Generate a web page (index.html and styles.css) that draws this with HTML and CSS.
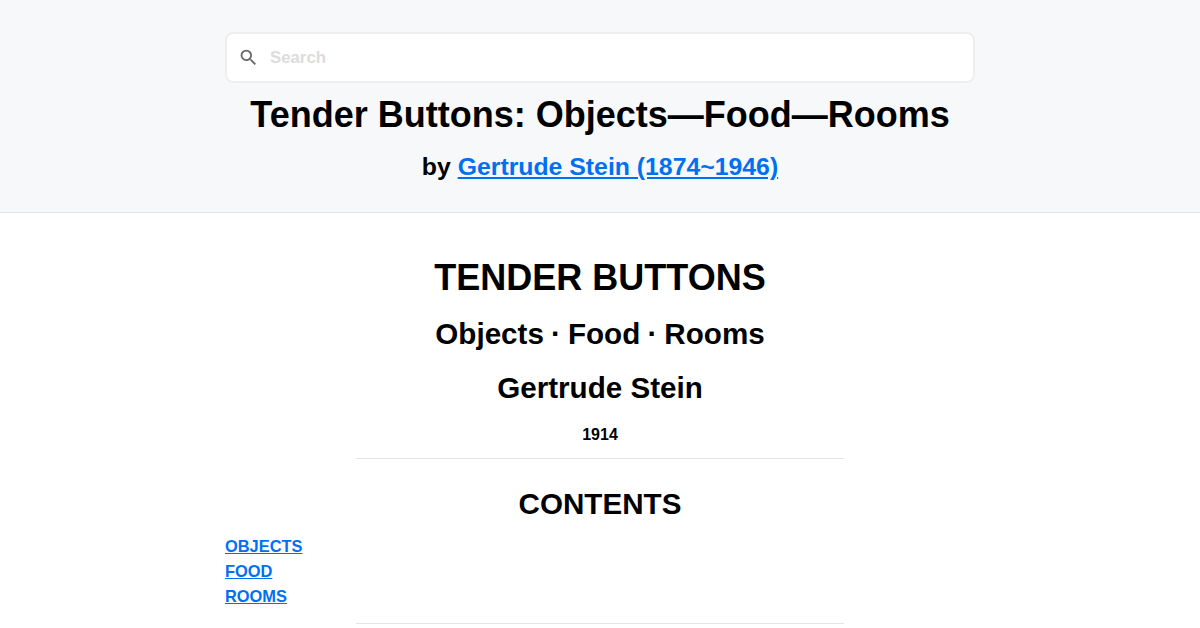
FILE: index.html
```html
<!DOCTYPE html>
<html lang="en">
<head>
<meta charset="utf-8">
<title>Tender Buttons</title>
<link rel="stylesheet" href="styles.css">
</head>
<body>
<header class="masthead">
  <div class="wrap">
    <form class="search">
      <svg class="search-icon" viewBox="0 0 24 24" width="21" height="21" aria-hidden="true"><path d="M15.5 14h-.79l-.28-.27A6.47 6.47 0 0 0 16 9.5 6.5 6.5 0 1 0 9.5 16c1.61 0 3.09-.59 4.23-1.57l.27.28v.79l5 4.99L20.49 19l-4.99-5zm-6 0C7.01 14 5 11.99 5 9.5S7.01 5 9.5 5 14 7.01 14 9.5 11.99 14 9.5 14z"/></svg>
      <input class="search-input" type="text" placeholder="Search">
    </form>
    <h1 class="book-title">Tender Buttons: Objects—Food—Rooms</h1>
    <p class="byline">by <a href="#">Gertrude Stein (1874~1946)</a></p>
  </div>
</header>
<main class="wrap content">
  <h2 class="t1">TENDER BUTTONS</h2>
  <h3 class="t2">Objects · Food · Rooms</h3>
  <h3 class="t3">Gertrude Stein</h3>
  <p class="year">1914</p>
  <hr class="rule">
  <h3 class="contents">CONTENTS</h3>
  <ul class="toc">
    <li><a href="#">OBJECTS</a></li>
    <li><a href="#">FOOD</a></li>
    <li><a href="#">ROOMS</a></li>
  </ul>
  <hr class="rule rule-end">
</main>
</body>
</html>
```
FILE: styles.css
```css
* { box-sizing: border-box; }
html, body { margin: 0; padding: 0; }
body {
  font-family: "Liberation Sans", Arial, sans-serif;
  font-weight: 700;
  color: #000;
  background: #fff;
  overflow: hidden;
  height: 628px;
}
a { color: #0070f3; }
.wrap { width: 750px; margin: 0 auto; }
.masthead {
  height: 213px;
  background: #f7f8fa;
  border-bottom: 1px solid #e5e5e5;
  padding-top: 32px;
}
.search {
  height: 51px;
  display: flex;
  align-items: center;
  background: #fff;
  border: 2px solid #eeeeee;
  border-radius: 8px;
  padding-left: 11px;
}
.search-icon { fill: #666; flex: none; }
.search-input {
  flex: 1;
  border: 0;
  outline: 0;
  background: transparent;
  margin-left: 11px;
  padding: 0;
  font: 700 16.8px "Liberation Sans", Arial, sans-serif;
}
.search-input::placeholder { color: #dcdcdc; opacity: 1; }
.book-title {
  margin: 9px 0 0;
  font-size: 36px;
  line-height: 46px;
  text-align: center;
}
.byline {
  margin: 13px 0 0;
  font-size: 24.8px;
  line-height: 32px;
  text-align: center;
}
.content { padding-top: 41px; }
.t1 { margin: 0; font-size: 36px; line-height: 48px; text-align: center; }
.t2 { margin: 12px 0 0; font-size: 29.6px; line-height: 40px; text-align: center; word-spacing: -1.1px; }
.t3 { margin: 14px 0 0; font-size: 29.6px; line-height: 40px; text-align: center; }
.year { margin: 15px 0 0; font-size: 16px; line-height: 24px; text-align: center; }
.rule { width: 488px; height: 1px; border: 0; background: #e5e5e5; margin: 11px auto 0; }
.contents { margin: 24px 0 0; font-size: 29.6px; line-height: 42px; text-align: center; }
.toc { list-style: none; margin: 9px 0 0; padding: 0; font-size: 16.4px; line-height: 25px; }
.rule-end { margin-top: 14px; }
```
